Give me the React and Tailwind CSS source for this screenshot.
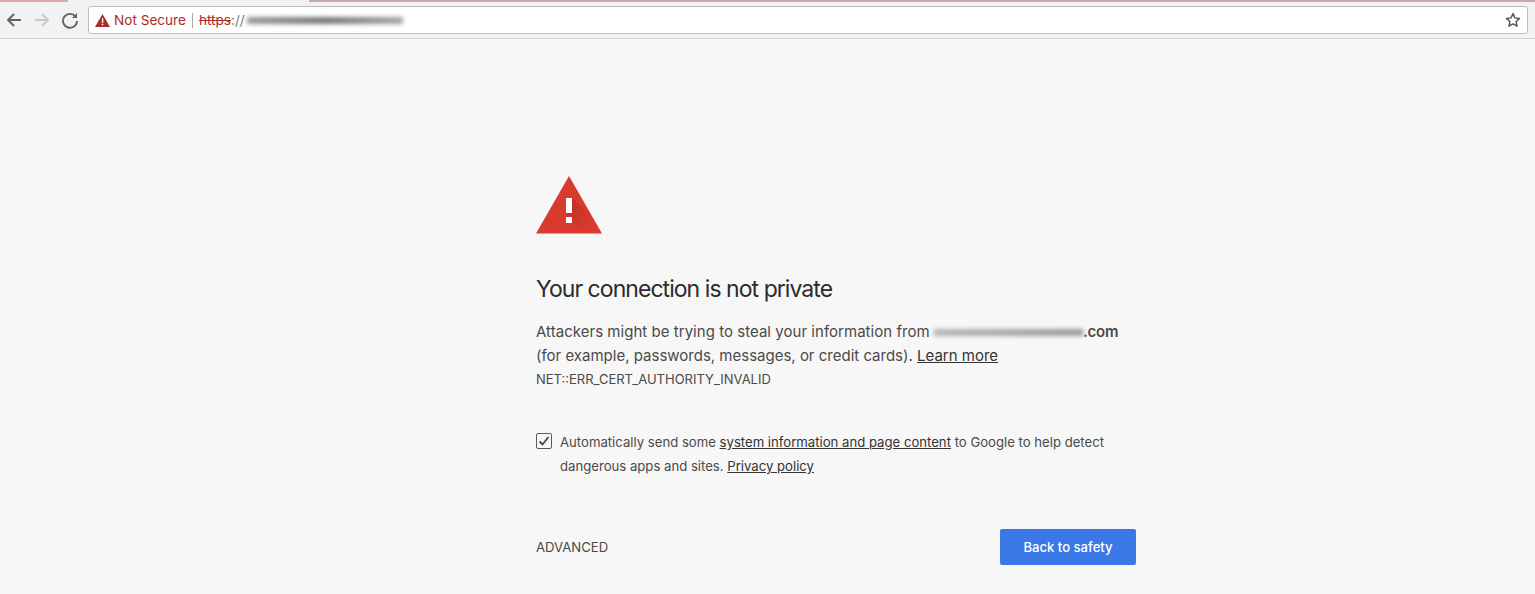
import React from "react";

export default function App() {
  return (
    <div className="min-h-[594px] flex flex-col bg-[#f7f7f7] font-[Inter,'Liberation_Sans',sans-serif]">
      <div className="h-[39px] bg-[#f2f2f2] border-b border-[#d4d4d4] flex flex-col">
        <div className="h-[2px] flex justify-between">
          <div className="w-[68px] bg-[#d9a9a9]" />
          <div className="w-[1226px] bg-[#c9a9b0]" />
        </div>
        <div className="flex-1 flex items-center pl-[5px] pr-[7px]">
          <svg width="18" height="18" viewBox="0 0 18 18" fill="none" stroke="#5f6368" strokeWidth="1.9" className="mr-[10px]">
            <path d="M16 9H3M9 3L3 9l6 6" />
          </svg>
          <svg width="18" height="18" viewBox="0 0 18 18" fill="none" stroke="#c8cacc" strokeWidth="1.9" className="mr-[10px]">
            <path d="M2 9h13M9 3l6 6-6 6" />
          </svg>
          <svg width="18" height="18" viewBox="0 0 18 18" fill="none" stroke="#5f6368" strokeWidth="1.9" className="mr-[9px]">
            <path d="M14.5 5.5A7 7 0 1 0 16 10" />
            <path d="M16 2v5h-5" fill="#5f6368" stroke="none" />
          </svg>
          <div className="flex-1 h-[28px] bg-white border border-[#bdbdbd] rounded-[3px] flex items-center pl-[6px] pr-[6px] text-[13.6px] text-[#a92d26]">
            <svg width="15" height="13" viewBox="0 0 15 13" className="mr-[4px]">
              <path d="M7.5 0L15 13H0z" fill="#a92d26" />
              <rect x="6.8" y="4.2" width="1.5" height="4.6" fill="#fff" />
              <rect x="6.8" y="9.8" width="1.5" height="1.5" fill="#fff" />
            </svg>
            <span>Not Secure</span>
            <span className="w-px h-[15px] bg-[#a8a8a8] mx-[6px]" />
            <span className="line-through">https</span>
            <span className="text-[#777] mr-[2px]">://</span>
            <span className="inline-block w-[156px] h-[7px] blur-[2px] bg-linear-to-r from-[#9a9a9a] via-[#777777] to-[#a5a5a5]" />
            <span className="flex-1" />
            <svg width="16" height="16" viewBox="0 0 24 24" fill="none" stroke="#555" strokeWidth="2.2" strokeLinejoin="round">
              <path d="M12 2.5l2.9 6.3 6.9.8-5.1 4.7 1.4 6.8-6.1-3.4-6.1 3.4 1.4-6.8-5.1-4.7 6.9-.8z" />
            </svg>
          </div>
        </div>
      </div>

      <main className="ml-[536px] w-[600px] pt-[137px] flex flex-col">
        <svg width="66" height="58" viewBox="0 0 66 58">
          <defs>
            <linearGradient id="sh" x1="0.2" y1="0.1" x2="0.9" y2="0.9">
              <stop offset="0" stopColor="#b02a20" stopOpacity="0.55" />
              <stop offset="1" stopColor="#b02a20" stopOpacity="0" />
            </linearGradient>
          </defs>
          <path d="M33 0L66 57.5H0z" fill="#d93a2e" />
          <path d="M36 22L55 38.5V57.5H46L30 41z" fill="url(#sh)" />
          <rect x="30" y="22" width="6" height="15" fill="#fff" />
          <rect x="30" y="41" width="6" height="6" fill="#fff" />
        </svg>
        <h1 className="mt-[39px] text-[23px] leading-[32px] text-[#2a2b2e] font-normal tracking-[-0.95px]">Your connection is not private</h1>
        <p className="mt-[15px] text-[15px] leading-[24px] text-[#4a4a4a]">
          <span className="tracking-[0.035px]">Attackers might be trying to steal your information from </span>
          <span className="inline-block align-middle w-[149px] h-[7px] blur-[2px] bg-linear-to-r from-[#b5b5b5] via-[#a8a8a8] to-[#999999]" />
          <strong className="font-semibold tracking-[-0.2px]">.com</strong>
          <br />
          (for example, passwords, messages, or credit cards). <a className="underline text-[#333]">Learn more</a>
        </p>
        <p className="-mt-px text-[13px] leading-[24px] text-[#4a4a4a]">NET::ERR_CERT_AUTHORITY_INVALID</p>
        <div className="mt-[39px] flex items-start text-[13.15px] leading-[24px] text-[#4a4a4a]">
          <span className="mt-[3px] mr-[8px] w-[16px] h-[16px] shrink-0 border border-[#5a5a5a] rounded-[2px] flex items-center justify-center">
            <svg width="12" height="12" viewBox="0 0 12 12" fill="none" stroke="#444" strokeWidth="1.8">
              <path d="M1.5 6.5L4.5 9.5L10.5 2" />
            </svg>
          </span>
          <p>
            Automatically send some <a className="underline text-[#333]">system information and page content</a> to Google to help detect
            <br />
            dangerous apps and sites. <a className="underline text-[#333]">Privacy policy</a>
          </p>
        </div>
        <div className="mt-[51px] flex items-center justify-between">
          <span className="pt-[2px] text-[13.15px] text-[#4a4a4a]">ADVANCED</span>
          <button className="w-[136px] h-[36px] rounded-[2px] bg-[#3b78e7] text-white text-[13.1px] font-medium pt-[1px]">Back to safety</button>
        </div>
      </main>
    </div>
  );
}
